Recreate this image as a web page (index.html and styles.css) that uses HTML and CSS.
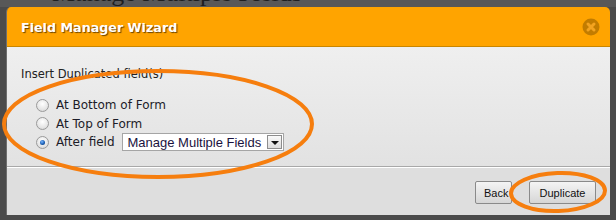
FILE: index.html
```html
<!DOCTYPE html>
<html>
<head>
<meta charset="utf-8">
<link rel="stylesheet" href="styles.css">
</head>
<body>
<div class="page">
  <div class="behind-title">Manage Multiple Fields</div>
  <div class="dialog">
    <div class="header">
      <span class="title">Field Manager Wizard</span>
      <span class="close">
        <svg width="18" height="18" viewBox="0 0 18 18">
          <circle cx="9" cy="9" r="8.5" fill="#c27c00"/>
          <path d="M6 6 L12 12 M12 6 L6 12" stroke="#f3a320" stroke-width="3" stroke-linecap="round"/>
        </svg>
      </span>
    </div>
    <div class="body">
      <div class="label">Insert Duplicated field(s)</div>
      <div class="options">
        <label class="opt"><span class="radio"></span>At Bottom of Form</label>
        <label class="opt"><span class="radio"></span>At Top of Form</label>
        <label class="opt"><span class="radio checked"></span>After field
          <span class="select"><span class="select-text">Manage Multiple Fields</span><span class="select-arrow"></span></span>
        </label>
      </div>
    </div>
    <div class="footer">
      <button class="btn">Back</button>
      <button class="btn">Duplicate</button>
    </div>
  </div>
  <svg class="marks" width="616" height="220" viewBox="0 0 616 220">
    <ellipse cx="158" cy="124" rx="154" ry="53" fill="none" stroke="#f67e0e" stroke-width="4"/>
    <ellipse cx="558" cy="192" rx="47" ry="19" fill="none" stroke="#f67e0e" stroke-width="4" transform="rotate(-2 558 192)"/>
  </svg>
</div>
</body>
</html>
```

FILE: styles.css
```css
html, body {
  margin: 0;
  padding: 0;
}
body {
  background: #4b4b4b;
  width: 616px;
  height: 220px;
  overflow: hidden;
  font-family: "DejaVu Sans", Verdana, sans-serif;
}
.page {
  position: relative;
  width: 616px;
  height: 220px;
  padding: 7px 6px 5px 6px;
  box-sizing: border-box;
  background: linear-gradient(#585858 0, #585858 7px, #4b4b4b 7px);
}
.behind-title {
  position: absolute;
  left: 52px;
  top: -22px;
  font-family: "Liberation Serif", serif;
  font-size: 26px;
  line-height: 30px;
  color: #1e1e1e;
  white-space: nowrap;
}
.dialog {
  position: relative;
  height: 208px;
  border-radius: 5px 5px 0 0;
  overflow: hidden;
  display: flex;
  flex-direction: column;
  border-left: 1px solid #6e6e6e;
}
.header {
  height: 39px;
  flex: none;
  background: #ffa400;
  border-bottom: 1px solid #c98600;
  display: flex;
  align-items: center;
  justify-content: space-between;
  padding: 0 10px 0 14px;
}
.title {
  color: #fff;
  font-weight: bold;
  font-size: 12.7px;
  text-shadow: 1px 1px 1px #6b4300;
  padding-top: 2px;
}
.close {
  display: flex;
  margin-top: 1px;
}
.body {
  height: 120px;
  flex: none;
  box-sizing: border-box;
  background: linear-gradient(#efefef, #e2e2e2);
  border-bottom: 1px solid #a8a8a8;
  padding: 21px 14px 0 14px;
  font-size: 11.5px;
  color: #222;
}
.label {
  line-height: 13px;
}
.options {
  margin-top: 15px;
  margin-left: 15px;
  display: flex;
  flex-direction: column;
}
.opt {
  display: flex;
  align-items: center;
  height: 18.5px;
  font-size: 12px;
  color: #1c1c28;
}
.radio {
  width: 11px;
  height: 11px;
  border-radius: 50%;
  border: 1px solid #9a9a9a;
  background: radial-gradient(circle at 50% 35%, #fff 0, #e6e6e6 60%, #cfcfcf 100%);
  margin-right: 7px;
  box-sizing: content-box;
  position: relative;
}
.radio.checked::after {
  content: "";
  position: absolute;
  left: 3px;
  top: 3px;
  width: 5px;
  height: 5px;
  border-radius: 50%;
  background: radial-gradient(circle at 40% 35%, #7ab6ff 0, #1a5fb4 55%, #0b2f66 100%);
}
.select {
  display: inline-flex;
  align-items: center;
  margin-left: 7px;
  height: 18px;
  width: 162px;
  box-sizing: border-box;
  border: 1px solid #a5a5a5;
  background: #fff;
  font-family: "Liberation Sans", Arial, sans-serif;
  font-size: 13px;
  color: #1a1240;
  padding-left: 5px;
  justify-content: space-between;
}
.select-arrow {
  width: 15px;
  height: 14px;
  margin-right: 1px;
  box-sizing: border-box;
  border: 1px solid #8d8d8d;
  background: linear-gradient(#fafafa, #dcdcdc);
  position: relative;
}
.select-arrow::after {
  content: "";
  position: absolute;
  left: 3px;
  top: 5px;
  border-left: 4px solid transparent;
  border-right: 4px solid transparent;
  border-top: 4px solid #111;
}
.footer {
  flex: 1;
  border-top: 1px solid #fff;
  background: #dedede;
  display: flex;
  justify-content: flex-end;
  align-items: flex-start;
  padding: 13px 14px 0 0;
  gap: 17px;
}
.btn {
  height: 23px;
  padding: 0 8px;
  border: 1px solid #8a8a8a;
  border-radius: 2px;
  background: linear-gradient(#f4f4f4, #d6d6d6);
  font-family: "Liberation Sans", Arial, sans-serif;
  font-size: 11px;
  color: #111;
}
.btn:last-child {
  width: 67px;
}
.btn:first-child {
  width: 37px;
}
.marks {
  position: absolute;
  left: 0;
  top: 0;
  pointer-events: none;
  filter: blur(0.3px);
}
```
